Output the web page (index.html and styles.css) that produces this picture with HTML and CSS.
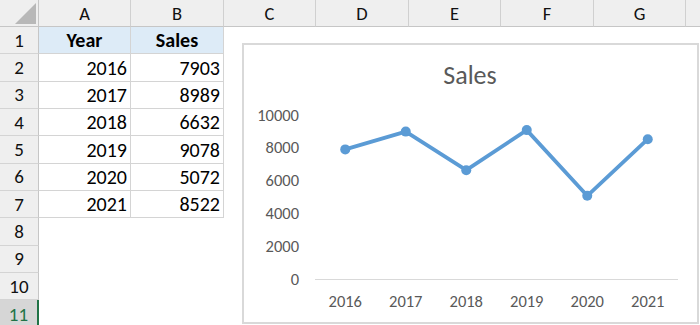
FILE: index.html
```html
<!DOCTYPE html>
<html>
<head>
<meta charset="utf-8">
<link rel="stylesheet" href="styles.css">
</head>
<body>
<div class="sheet">
  <div class="hd corner"><svg width="38" height="26" viewBox="0 0 38 26"><polygon points="15,24 36,24 36,3" fill="#b8b8b8"/></svg></div>
  <div class="hd col">A</div>
  <div class="hd col">B</div>
  <div class="hd col">C</div>
  <div class="hd col">D</div>
  <div class="hd col">E</div>
  <div class="hd col">F</div>
  <div class="hd col">G</div>
  <div class="hd col last"></div>

  <div class="hd row">1</div><div class="cell head">Year</div><div class="cell head">Sales</div><div class="rest"></div>
  <div class="hd row">2</div><div class="cell num">2016</div><div class="cell num">7903</div><div class="rest"></div>
  <div class="hd row">3</div><div class="cell num">2017</div><div class="cell num">8989</div><div class="rest"></div>
  <div class="hd row">4</div><div class="cell num">2018</div><div class="cell num">6632</div><div class="rest"></div>
  <div class="hd row">5</div><div class="cell num">2019</div><div class="cell num">9078</div><div class="rest"></div>
  <div class="hd row">6</div><div class="cell num">2020</div><div class="cell num">5072</div><div class="rest"></div>
  <div class="hd row">7</div><div class="cell num">2021</div><div class="cell num">8522</div><div class="rest"></div>
  <div class="hd row">8</div><div class="blank"></div>
  <div class="hd row">9</div><div class="blank"></div>
  <div class="hd row">10</div><div class="blank"></div>
  <div class="hd row sel">11</div><div class="blank"></div>
</div>

<div class="chart">
  <svg class="plot" width="453" height="277" viewBox="244 45 453 277">
    <text class="title" x="470" y="84" text-anchor="middle">Sales</text>
    <g class="ylab" text-anchor="end">
      <text x="299" y="120.5">10000</text>
      <text x="299" y="153.3">8000</text>
      <text x="299" y="186.1">6000</text>
      <text x="299" y="218.9">4000</text>
      <text x="299" y="251.7">2000</text>
      <text x="299" y="284.5">0</text>
    </g>
    <line x1="315" y1="279.5" x2="678" y2="279.5" stroke="#d9d9d9" stroke-width="1"/>
    <g class="xlab" text-anchor="middle">
      <text x="345.25" y="307">2016</text>
      <text x="405.75" y="307">2017</text>
      <text x="466.25" y="307">2018</text>
      <text x="526.75" y="307">2019</text>
      <text x="587.25" y="307">2020</text>
      <text x="647.75" y="307">2021</text>
    </g>
    <polyline points="345.25,149.4 405.75,131.6 466.25,170.2 526.75,130.1 587.25,195.8 647.75,139.2" fill="none" stroke="#5b9bd5" stroke-width="3.8" stroke-linejoin="round" stroke-linecap="round"/>
    <g fill="#5b9bd5">
      <circle cx="345.25" cy="149.4" r="5"/>
      <circle cx="405.75" cy="131.6" r="5"/>
      <circle cx="466.25" cy="170.2" r="5"/>
      <circle cx="526.75" cy="130.1" r="5"/>
      <circle cx="587.25" cy="195.8" r="5"/>
      <circle cx="647.75" cy="139.2" r="5"/>
    </g>
  </svg>
</div>
</body>
</html>
```
FILE: styles.css
```css
html, body {
  margin: 0;
  padding: 0;
  width: 700px;
  height: 325px;
  overflow: hidden;
  background: #ffffff;
  font-family: Carlito, Lato, "Liberation Sans", sans-serif;
}

.sheet {
  display: grid;
  grid-template-columns: 39px 92px 93px 92px 93px 92px 93px 92px 1fr;
  grid-template-rows: 27px repeat(11, 27.35px);
  width: 700px;
}

.hd {
  box-sizing: border-box;
  background: #efefef;
  color: #111;
  font-size: 18.5px;
  display: flex;
  align-items: center;
  justify-content: center;
}

.corner {
  border-right: 1px solid #c6c6c6;
  border-bottom: 1px solid #c6c6c6;
  align-items: flex-start;
  justify-content: flex-start;
}

.corner svg {
  display: block;
}

.col {
  border-right: 1px solid #d0d0d0;
  border-bottom: 1px solid #c6c6c6;
}

.col.last {
  border-right: none;
}

.row {
  border-right: 1px solid #c6c6c6;
  border-bottom: 1px solid #d4d4d4;
  font-size: 19px;
}

.row.sel {
  background: #d6d6d6;
  color: #217346;
  border-right: 2px solid #217346;
  border-bottom: none;
}

.cell {
  box-sizing: border-box;
  border-right: 1px solid #d4d4d4;
  border-bottom: 1px solid #d4d4d4;
  font-size: 20px;
  color: #000;
  display: flex;
  align-items: center;
}

.cell.head {
  background: #ddebf7;
  font-weight: bold;
  justify-content: center;
}

.cell.num {
  justify-content: flex-end;
  padding-right: 3px;
}

.rest {
  grid-column: 4 / -1;
}

.blank {
  grid-column: 2 / -1;
}

.chart {
  position: absolute;
  left: 242px;
  top: 43px;
  width: 457px;
  height: 281px;
  box-sizing: border-box;
  border: 2px solid #d9d9d9;
  background: #ffffff;
}

.plot {
  display: block;
}

.title {
  font-size: 26px;
  fill: #595959;
}

.ylab text,
.xlab text {
  font-size: 16.5px;
  fill: #595959;
}
```
